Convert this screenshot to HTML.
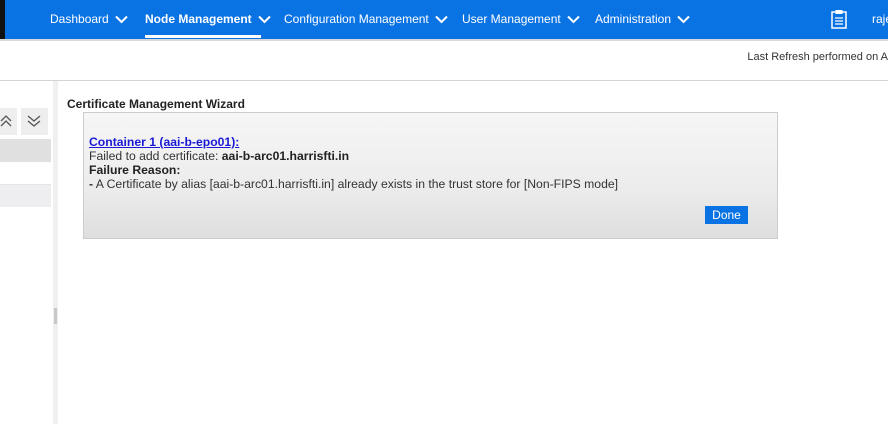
<!DOCTYPE html>
<html><head><style>
body{margin:0;width:888px;height:424px;overflow:hidden;background:#fff;font-family:"Liberation Sans",sans-serif;position:relative}
.nav{position:absolute;left:0;top:0;width:888px;height:39px;background:#0a73e4;border-bottom:2px solid #d8d8d8}
.blk{position:absolute;left:0;top:0;width:5px;height:39px;background:#111}
.ni{position:absolute;top:12px;color:#fff;font-size:12px;white-space:nowrap}
.ni svg{vertical-align:middle;margin-left:6px}
.ul{position:absolute;left:145px;top:35px;width:116px;height:3px;background:#fff}
.ref{position:absolute;right:0;top:51px;font-size:11px;color:#333;white-space:nowrap}
.hl{position:absolute;left:0;top:80px;width:888px;height:1px;background:#d4d4d4}
.lp{position:absolute;left:0;top:81px;width:51px;height:343px}
.split{position:absolute;left:53px;top:81px;width:5px;height:343px;background:#f0f0f0}
.title{position:absolute;left:67px;top:97px;font-size:12px;font-weight:bold;color:#222}
.dlg{position:absolute;left:83px;top:112px;width:693px;height:125px;border:1px solid #ccc;background:linear-gradient(#f6f6f6,#ececec 60%,#dedede);font-size:12.2px;color:#333;line-height:14px}
.txt{position:absolute;left:5px;top:22px}
a{color:#1a1ad6;font-weight:bold;text-decoration:underline}
.done{position:absolute;left:621px;top:93px;width:43px;height:18px;background:#0a73e4;color:#fff;font-size:12px;text-align:center;line-height:18px}
</style></head><body>
<div class="nav"><div class="blk"></div>
<div class="ni" style="left:50px">Dashboard<svg width="13" height="9"><path d="M1 1.5L6.5 7 12 1.5" stroke="#fff" stroke-width="2" fill="none"/></svg></div>
<div class="ni" style="left:145px;font-weight:bold">Node Management<svg width="13" height="9"><path d="M1 1.5L6.5 7 12 1.5" stroke="#fff" stroke-width="2" fill="none"/></svg></div>
<div class="ni" style="left:284px">Configuration Management<svg width="13" height="9"><path d="M1 1.5L6.5 7 12 1.5" stroke="#fff" stroke-width="2" fill="none"/></svg></div>
<div class="ni" style="left:462px">User Management<svg width="13" height="9"><path d="M1 1.5L6.5 7 12 1.5" stroke="#fff" stroke-width="2" fill="none"/></svg></div>
<div class="ni" style="left:595px">Administration<svg width="13" height="9"><path d="M1 1.5L6.5 7 12 1.5" stroke="#fff" stroke-width="2" fill="none"/></svg></div>
<div class="ul"></div>
<svg style="position:absolute;left:831px;top:9px" width="16" height="20"><rect x="1" y="3" width="14" height="16" stroke="#fff" stroke-width="1.5" fill="none"/><rect x="4.5" y="1" width="7" height="4" fill="#fff"/><path d="M4 9h8M4 12h8M4 15h8" stroke="#fff" stroke-width="1.3"/></svg>
<div class="ni" style="left:872px">raje</div>
</div>
<div class="ref">Last Refresh performed on A</div>
<div class="hl"></div>
<div class="lp">
<div style="position:absolute;left:0;top:27px;width:17px;height:27px;background:#eee"></div>
<svg style="position:absolute;left:0;top:34px" width="14" height="12"><path d="M1 6L6 1 11 6M1 11L6 6 11 11" stroke="#555" stroke-width="1.3" fill="none"/></svg>
<div style="position:absolute;left:21px;top:27px;width:27px;height:27px;background:#eee"></div>
<svg style="position:absolute;left:27px;top:34px" width="14" height="12"><path d="M1 1L7 6 13 1M1 6L7 11 13 6" stroke="#555" stroke-width="1.3" fill="none"/></svg>
<div style="position:absolute;left:0;top:58px;width:51px;height:23px;background:#e0e0e0"></div>
<div style="position:absolute;left:0;top:82px;width:51px;height:21px;border-bottom:1px solid #e4e4e4"></div>
<div style="position:absolute;left:0;top:104px;width:51px;height:22px;background:#eeeef0"></div>
</div>
<div class="split"><div style="position:absolute;left:1px;top:227px;width:3px;height:16px;background:#c8c8c8"></div></div>
<div class="title">Certificate Management Wizard</div>
<div class="dlg"><div class="txt"><a>Container 1 (aai-b-epo01):</a><br>Failed to add certificate: <b style="color:#222">aai-b-arc01.harrisfti.in</b><br><b style="color:#222">Failure Reason:</b><br><b>-</b> A Certificate by alias [aai-b-arc01.harrisfti.in] already exists in the trust store for [Non-FIPS mode]</div>
<div class="done">Done</div></div>
</body></html>
